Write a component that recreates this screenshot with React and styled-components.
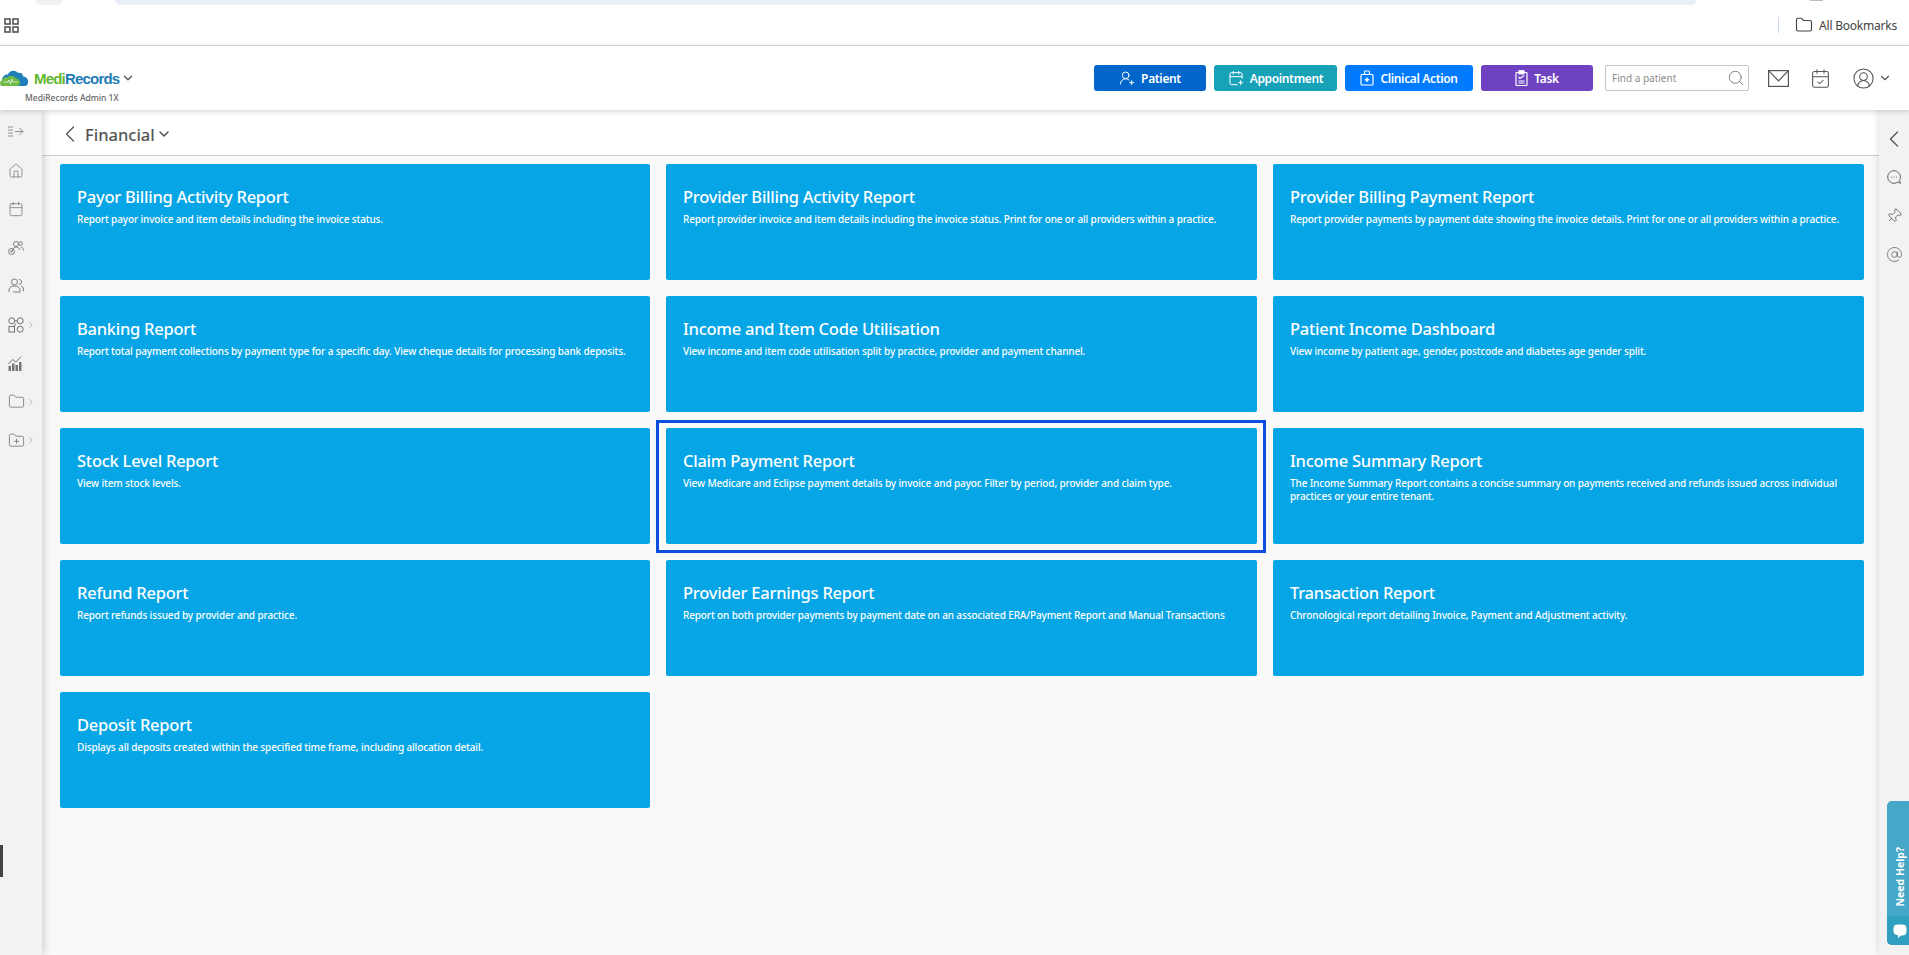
import React from 'react';
import styled, { createGlobalStyle } from 'styled-components';
import { ChevronDown, ChevronLeft, ChevronRight, Search, Home, Calendar, CalendarCheck, CircleUserRound, Folder, FolderPlus, Pin, AtSign, UserRoundPlus, CalendarPlus } from 'lucide-react';

const GlobalStyle = createGlobalStyle`
    html, body {
        margin: 0;
        padding: 0;
        height: 100%;
        overflow: hidden;
        background: #fff;
    }
    body {
        font-family: "Noto Sans", "Open Sans", sans-serif;
    }
    * { box-sizing: border-box; }
`;

const reports = [
    { title: 'Payor Billing Activity Report', text: 'Report payor invoice and item details including the invoice status.' },
    { title: 'Provider Billing Activity Report', text: 'Report provider invoice and item details including the invoice status. Print for one or all providers within a practice.' },
    { title: 'Provider Billing Payment Report', text: 'Report provider payments by payment date showing the invoice details. Print for one or all providers within a practice.' },
    { title: 'Banking Report', text: 'Report total payment collections by payment type for a specific day. View cheque details for processing bank deposits.' },
    { title: 'Income and Item Code Utilisation', text: 'View income and item code utilisation split by practice, provider and payment channel.' },
    { title: 'Patient Income Dashboard', text: 'View income by patient age, gender, postcode and diabetes age gender split.' },
    { title: 'Stock Level Report', text: 'View item stock levels.' },
    { title: 'Claim Payment Report', text: 'View Medicare and Eclipse payment details by invoice and payor. Filter by period, provider and claim type.', active: true },
    { title: 'Income Summary Report', text: 'The Income Summary Report contains a concise summary on payments received and refunds issued across individual practices or your entire tenant.' },
    { title: 'Refund Report', text: 'Report refunds issued by provider and practice.' },
    { title: 'Provider Earnings Report', text: 'Report on both provider payments by payment date on an associated ERA/Payment Report and Manual Transactions' },
    { title: 'Transaction Report', text: 'Chronological report detailing Invoice, Payment and Adjustment activity.' },
    { title: 'Deposit Report', text: 'Displays all deposits created within the specified time frame, including allocation detail.' },
];

function AppsIcon() {
    return (
        <svg width="15" height="15" viewBox="0 0 15 15" fill="none" stroke="#555" strokeWidth="1.6">
            <rect x="1" y="1" width="5" height="5" />
            <rect x="9" y="1" width="5" height="5" />
            <rect x="1" y="9" width="5" height="5" />
            <rect x="9" y="9" width="5" height="5" />
        </svg>
    );
}

function ExpandIcon() {
    return (
        <svg width="16" height="14" viewBox="0 0 16 14" fill="none" stroke="#8a8a8a" strokeWidth="1">
            <path d="M0 2h5M0 5h5M0 8h5M0 11h5" stroke="#b5b5b5" strokeWidth="1.4" />
            <path d="M7 6.500h8M11.500 3l3.500 3.500-3.500 3.500" />
        </svg>
    );
}

function CloudLogo() {
    return (
        <svg width="29" height="17" viewBox="0 0 29 17">
            <path d="M2 10C2 6 6 4 8 4.500c1-4 7-5.500 10-1.500 3-1 5 1 5 3.500 3 0 6 3 5 6.500-.5 2.500-2 3-4 3H8z" fill="#1f7fb8" />
            <path d="M1.500 16C-.500 15-.500 11 2 10.500c0-2.500 3-4 5.500-3 2-2 7-2 8.500 1 2.500 0 4.500 2.500 4 5-.3 1.500-1.500 2.500-3 2.500z" fill="#6dbb45" />
            <path d="M3.500 12h4.500l1-2 1.500 4 1.500-5 1 3h4.500" fill="none" stroke="#fff" strokeWidth="0.7" />
        </svg>
    );
}

function ClinicalIcon() {
    return (
        <svg width="14" height="16" viewBox="0 0 14 16" fill="none" stroke="#fff" strokeWidth="1.200">
            <rect x="1" y="4.500" width="12" height="10.500" rx="1" />
            <path d="M4.500 4.500V2a1 1 0 011-1h3a1 1 0 011 1v2.500" />
            <path d="M7 7.500v4.500M4.800 9.700h4.400" strokeWidth="1.400" />
        </svg>
    );
}

function TaskIcon() {
    return (
        <svg width="13" height="16" viewBox="0 0 13 16" fill="none" stroke="#fff" strokeWidth="1.200">
            <rect x="1" y="2.500" width="11" height="13" rx="0.800" />
            <rect x="4" y="0.800" width="5" height="3" fill="#fff" />
            <path d="M3.500 7l1.500 1.500L9 5.500M3.500 11h6M3.500 13h6" />
        </svg>
    );
}

function MailIcon() {
    return (
        <svg width="21" height="17" viewBox="0 0 21 17" fill="none" stroke="#555" strokeWidth="1.200">
            <rect x="0.600" y="0.600" width="19.800" height="15.800" />
            <path d="M0.600 0.600L10.500 11 20.400 0.600" />
        </svg>
    );
}

function PeopleBadgeIcon() {
    return (
        <svg width="16" height="16" viewBox="0 0 16 16" fill="none" stroke="#6f6f6f" strokeWidth="0.900">
            <circle cx="8" cy="4" r="2.500" />
            <path d="M4.500 11c0-2.500 1.500-4 3.500-4s3.500 1 4 3" />
            <circle cx="12.500" cy="3.500" r="1.800" />
            <path d="M13 7c1.500.5 2.500 1.500 2.500 3.500" />
            <circle cx="3.500" cy="11.500" r="3" />
            <circle cx="3.500" cy="11.500" r="0.800" />
        </svg>
    );
}

function PeopleIcon() {
    return (
        <svg width="16" height="16" viewBox="0 0 16 16" fill="none" stroke="#6f6f6f" strokeWidth="0.900">
            <circle cx="6.500" cy="4" r="3" />
            <path d="M1 14v-2.500C1 9.500 3.500 8 6.500 8s5.500 1.500 5.500 3.500V14H5" />
            <path d="M11 1.500c1.500 0 2.500 1 2.500 2.500S12.500 6.500 11 6.500M13 8c1.300.5 2.500 1.500 2.500 3v2" />
        </svg>
    );
}

function ModulesIcon() {
    return (
        <svg width="16" height="16" viewBox="0 0 16 16" fill="none" stroke="#6f6f6f" strokeWidth="1">
            <circle cx="3.800" cy="3.800" r="3" />
            <circle cx="12.200" cy="3.800" r="3" />
            <rect x="1" y="9.500" width="5.500" height="5.500" />
            <circle cx="12.200" cy="12.200" r="3" />
            <path d="M6.800 3.800h2.400M6 9.500l2-3" />
        </svg>
    );
}

function ChartIcon() {
    return (
        <svg width="14" height="15" viewBox="0 0 14 15" fill="#777" stroke="none">
            <rect x="0.500" y="10" width="2.500" height="5" />
            <rect x="4" y="7.500" width="2.500" height="7.500" />
            <rect x="7.500" y="9" width="2.500" height="6" />
            <rect x="11" y="6" width="2.500" height="9" />
            <path d="M0.500 8L4.500 3.500 8 6l5-5.500" fill="none" stroke="#777" strokeWidth="1" />
        </svg>
    );
}

function ChatIcon() {
    return (
        <svg width="15" height="15" viewBox="0 0 15 15" fill="none" stroke="#666" strokeWidth="1">
            <path d="M7 .7a6.300 6.300 0 100 12.600c1.500 0 3-.5 4-1.300l2.500 1.300-.9-3c.6-1 .8-2 .8-3.200A6.300 6.300 0 007 .7z" />
            <path d="M4.500 7h.01M7 7h.01M9.500 7h.01" strokeWidth="1.200" strokeLinecap="round" />
        </svg>
    );
}

const navItems = [
    { icon: <Home size={16} color="#6f6f6f" strokeWidth={1.1} /> },
    { icon: <Calendar size={16} color="#6f6f6f" strokeWidth={1.1} /> },
    { icon: <PeopleBadgeIcon /> },
    { icon: <PeopleIcon /> },
    { icon: <ModulesIcon />, more: true },
    { icon: <ChartIcon /> },
    { icon: <Folder size={17} color="#6f6f6f" strokeWidth={1.1} />, more: true },
    { icon: <FolderPlus size={17} color="#6f6f6f" strokeWidth={1.1} />, more: true },
];

const actions = [
    { label: 'Patient', icon: <UserRoundPlus size={16} strokeWidth={1.5} />, color: '#0066cc', width: 112 },
    { label: 'Appointment', icon: <CalendarPlus size={16} strokeWidth={1.5} />, color: '#17a2b8', width: 123 },
    { label: 'Clinical Action', icon: <ClinicalIcon />, color: '#007bff', width: 128 },
    { label: 'Task', icon: <TaskIcon />, color: '#6f42c1', width: 112 },
];

function App() {
    return (
        <>
            <GlobalStyle />
            <Page>
                <BrowserBar>
                    <AddressRow>
                        <TabCircle />
                        <AddressEnd />
                        <TabStub />
                    </AddressRow>
                    <BookmarkRow>
                        <AppsIcon />
                        <Bookmarks>
                            <Folder size={18} color="#444" strokeWidth={1.5} />
                            All Bookmarks
                        </Bookmarks>
                    </BookmarkRow>
                </BrowserBar>

                <Header>
                    <Brand>
                        <BrandTop>
                            <CloudLogo />
                            <BrandName><b>Medi</b><i>Records</i></BrandName>
                            <ChevronDown size={14} color="#555" strokeWidth={2.2} />
                        </BrandTop>
                        <BrandSub>MediRecords Admin 1X</BrandSub>
                    </Brand>
                    <Actions>
                        {actions.map((a) => (
                            <ActionButton key={a.label} $color={a.color} $width={a.width}>
                                {a.icon}
                                {a.label}
                            </ActionButton>
                        ))}
                        <SearchBox>
                            <span>Find a patient</span>
                            <Search size={18} color="#777" strokeWidth={1.2} />
                        </SearchBox>
                        <HeaderIcons>
                            <MailIcon />
                            <CalendarCheck size={21} color="#555" strokeWidth={1.2} />
                            <UserMenu>
                                <CircleUserRound size={23} color="#555" strokeWidth={1.1} />
                                <ChevronDown size={14} color="#555" strokeWidth={2} />
                            </UserMenu>
                        </HeaderIcons>
                    </Actions>
                </Header>

                <Body>
                    <SideNav>
                        <NavSlot><ExpandIcon /></NavSlot>
                        {navItems.map((item, i) => (
                            <NavSlot key={i}>
                                {item.icon}
                                {item.more && <NavMore><ChevronRight size={10} color="#999" strokeWidth={1.6} /></NavMore>}
                            </NavSlot>
                        ))}
                        <SideMarker />
                    </SideNav>

                    <Main>
                        <TitleBar>
                            <ChevronLeft size={28} color="#555" strokeWidth={1.1} />
                            <PageTitle>Financial</PageTitle>
                            <ChevronDown size={16} color="#555" strokeWidth={2.3} />
                        </TitleBar>
                        <CardGrid>
                            {reports.map((r) => (
                                <Card key={r.title} $active={r.active}>
                                    <CardTitle>{r.title}</CardTitle>
                                    <CardText>{r.text}</CardText>
                                </Card>
                            ))}
                        </CardGrid>
                    </Main>

                    <RightRail>
                        <RailSlot><ChevronLeft size={28} color="#555" strokeWidth={1.1} /></RailSlot>
                        <RailSlot><ChatIcon /></RailSlot>
                        <RailSlot><TiltedPin size={16} color="#555" strokeWidth={1.2} /></RailSlot>
                        <RailSlot><AtSign size={17} color="#666" strokeWidth={1.1} /></RailSlot>
                    </RightRail>
                </Body>

                <HelpTab>
                    <span>Need Help?</span>
                    <HelpFoot>
                        <svg width="14" height="14" viewBox="0 0 14 14">
                            <path d="M4.500.500h5c2.500 0 4 1.500 4 4v3c0 2.500-1.500 4-4 4H8l-3 2.500V11.300C2 11 .500 9.500.500 7.500v-3C.500 2 2 .500 4.500.500z" fill="#fff" />
                        </svg>
                    </HelpFoot>
                </HelpTab>
            </Page>
        </>
    );
}

const Page = styled.div`
    width: 100%;
    height: 955px;
    display: flex;
    flex-direction: column;
    position: relative;
    overflow: hidden;
`;

const BrowserBar = styled.div`
    height: 46px;
    background: #fff;
    border-bottom: 1px solid #dedede;
    flex: none;
`;

const AddressRow = styled.div`
    height: 5px;
    display: flex;
    align-items: flex-start;
    padding-left: 35px;
`;

const TabCircle = styled.div`
    width: 28px;
    height: 5px;
    background: #f1f1f1;
    border-radius: 0 0 14px 14px;
`;

const AddressEnd = styled.div`
    width: 1581px;
    height: 5px;
    margin-left: 52px;
    background: #e9eef7;
    border-radius: 0 0 12px 12px;
`;

const TabStub = styled.div`
    width: 13px;
    height: 1px;
    margin-left: 114px;
    background: #bbb;
`;

const BookmarkRow = styled.div`
    height: 40px;
    display: flex;
    align-items: center;
    justify-content: space-between;
    padding: 0 12px 0 4px;
`;

const Bookmarks = styled.div`
    display: flex;
    align-items: center;
    gap: 6px;
    padding-left: 16px;
    height: 16px;
    border-left: 1px solid #c9d7ee;
    font-size: 12px;
    letter-spacing: -0.22px;
    color: #444;
`;

const Header = styled.header`
    height: 64px;
    flex: none;
    background: #fff;
    display: flex;
    align-items: flex-start;
    justify-content: space-between;
    padding: 19px 0 0;
    box-shadow: 0 1px 6px rgba(0, 0, 0, 0.2);
    position: relative;
    z-index: 3;
`;

const Brand = styled.div`
    display: flex;
    flex-direction: column;
`;

const BrandTop = styled.div`
    display: flex;
    align-items: center;
    gap: 5px;
    height: 26px;
`;

const BrandName = styled.div`
    font-family: "Liberation Sans", Arial, sans-serif;
    font-size: 15px;
    font-weight: 700;
    letter-spacing: -0.8px;
    margin-right: -3px;
    b { color: #62b82f; }
    i { color: #1f7cb8; font-style: normal; }
`;

const BrandSub = styled.div`
    font-size: 8.500px;
    font-weight: 500;
    color: #666;
    padding-left: 25px;
    line-height: 14px;
`;

const Actions = styled.div`
    display: flex;
    align-items: flex-start;
    gap: 8px;
`;

const ActionButton = styled.button`
    width: ${(p) => p.$width}px;
    height: 26px;
    border: 0;
    border-radius: 3px;
    background: ${(p) => p.$color};
    color: #fff;
    display: flex;
    align-items: center;
    justify-content: center;
    gap: 6px;
    font-family: inherit;
    font-size: 12px;
    font-weight: 600;
    letter-spacing: -0.35px;
    padding: 0;
`;

const SearchBox = styled.div`
    width: 144px;
    height: 26px;
    margin-left: 4px;
    border: 1px solid #c4c4c4;
    border-radius: 2px;
    display: flex;
    align-items: center;
    justify-content: space-between;
    padding: 0 3px 0 6px;
    font-size: 10px;
    color: #8c8c8c;
`;

const HeaderIcons = styled.div`
    display: flex;
    align-items: center;
    gap: 21px;
    height: 26px;
    margin-left: 11px;
    padding-right: 17px;
`;

const UserMenu = styled.div`
    display: flex;
    align-items: center;
    gap: 3px;
`;

const Body = styled.div`
    flex: 1;
    min-height: 0;
    display: flex;
`;

const SideNav = styled.nav`
    width: 42px;
    flex: none;
    background: #f2f2f2;
    box-shadow: 2px 0 8px rgba(0, 0, 0, 0.18);
    position: relative;
    z-index: 2;
    padding: 3px 0 0 8px;
    display: flex;
    flex-direction: column;
`;

const NavSlot = styled.div`
    height: 38.500px;
    display: flex;
    align-items: center;
    position: relative;
`;

const NavMore = styled.span`
    position: absolute;
    left: 18px;
    top: 14px;
    display: flex;
`;

const SideMarker = styled.div`
    position: absolute;
    left: 0;
    top: 735px;
    width: 3px;
    height: 32px;
    background: #444;
`;

const Main = styled.main`
    flex: 1;
    min-width: 0;
    background: #f9f9f9;
`;

const TitleBar = styled.div`
    height: 46px;
    background: #fff;
    border-bottom: 1px solid #cfcfcf;
    display: flex;
    align-items: center;
    padding: 3px 0 0 14px;
`;

const PageTitle = styled.h1`
    margin: 0 1px;
    font-size: 16.500px;
    font-weight: 500;
    color: #555;
`;

const CardGrid = styled.div`
    display: grid;
    grid-template-columns: 590px 591px 591px;
    grid-auto-rows: 116px;
    gap: 16px;
    padding: 8px 0 0 18px;
`;

const Card = styled.div`
    background: #06a5e6;
    border-radius: 2px;
    padding: 21px 17px 0;
    color: #fff;
    position: relative;
    ${(p) => p.$active && `
        &::after {
            content: '';
            position: absolute;
            top: -8px;
            left: -10px;
            right: -9px;
            bottom: -9px;
            border: 3px solid #0b4fe0;
        }
    `}
`;

const CardTitle = styled.h3`
    margin: 0;
    font-size: 16.500px;
    line-height: 24px;
    font-weight: 500;
    letter-spacing: -0.25px;
`;

const CardText = styled.p`
    margin: 4px 0 0;
    font-size: 10px;
    line-height: 13px;
    font-weight: 500;
    letter-spacing: -0.13px;
`;

const RightRail = styled.aside`
    width: 30px;
    flex: none;
    background: #f2f2f2;
    box-shadow: -1px 0 6px rgba(0, 0, 0, 0.12);
    display: flex;
    flex-direction: column;
    padding-top: 10px;
    position: relative;
    z-index: 2;
`;

const RailSlot = styled.div`
    height: 38.500px;
    display: flex;
    align-items: center;
    justify-content: center;
`;

const TiltedPin = styled(Pin)`
    transform: rotate(45deg);
`;

const HelpTab = styled.div`
    position: absolute;
    right: 0;
    top: 801px;
    width: 22px;
    height: 144px;
    background: #45a8c8;
    border-radius: 5px 0 0 5px;
    overflow: hidden;
    z-index: 4;
    display: flex;
    flex-direction: column;
    align-items: center;
    justify-content: flex-end;
    color: #fff;
    span {
        writing-mode: vertical-rl;
        transform: rotate(180deg);
        font-size: 10.500px;
        font-weight: 700;
        margin: 0 0 9px 3px;
    }
`;

const HelpFoot = styled.div`
    width: 100%;
    height: 29px;
    background: #2fa0bf;
    display: flex;
    align-items: center;
    justify-content: center;
    padding-left: 3px;
    flex: none;
`;

export default App;
